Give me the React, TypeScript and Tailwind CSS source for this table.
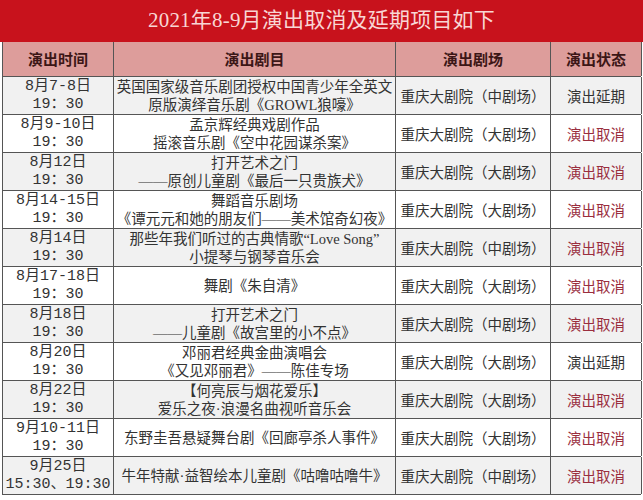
import React from 'react';

type Row = {
  date: string;
  time: string;
  show: string[];
  venue: string;
  status: string;
};

const rows: Row[] = [
  { date: '8月7-8日', time: '19：30', show: ['英国国家级音乐剧团授权中国青少年全英文', '原版演绎音乐剧《GROWL狼嚎》'], venue: '重庆大剧院（中剧场）', status: '演出延期' },
  { date: '8月9-10日', time: '19：30', show: ['孟京辉经典戏剧作品', '摇滚音乐剧《空中花园谋杀案》'], venue: '重庆大剧院（大剧场）', status: '演出取消' },
  { date: '8月12日', time: '19：30', show: ['打开艺术之门', '——原创儿童剧《最后一只贵族犬》'], venue: '重庆大剧院（大剧场）', status: '演出取消' },
  { date: '8月14-15日', time: '19：30', show: ['舞蹈音乐剧场', '《谭元元和她的朋友们——美术馆奇幻夜》'], venue: '重庆大剧院（大剧场）', status: '演出取消' },
  { date: '8月14日', time: '19：30', show: ['那些年我们听过的古典情歌“Love Song”', '小提琴与钢琴音乐会'], venue: '重庆大剧院（中剧场）', status: '演出取消' },
  { date: '8月17-18日', time: '19：30', show: ['舞剧《朱自清》'], venue: '重庆大剧院（大剧场）', status: '演出取消' },
  { date: '8月18日', time: '19：30', show: ['打开艺术之门', '——儿童剧《故宫里的小不点》'], venue: '重庆大剧院（中剧场）', status: '演出取消' },
  { date: '8月20日', time: '19：30', show: ['邓丽君经典金曲演唱会', '《又见邓丽君》——陈佳专场'], venue: '重庆大剧院（大剧场）', status: '演出延期' },
  { date: '8月22日', time: '19：30', show: ['【何亮辰与烟花爱乐】', '爱乐之夜·浪漫名曲视听音乐会'], venue: '重庆大剧院（大剧场）', status: '演出取消' },
  { date: '9月10-11日', time: '19：30', show: ['东野圭吾悬疑舞台剧《回廊亭杀人事件》'], venue: '重庆大剧院（大剧场）', status: '演出取消' },
  { date: '9月25日', time: '15:30、19:30', show: ['牛年特献·益智绘本儿童剧《咕噜咕噜牛》'], venue: '重庆大剧院（中剧场）', status: '演出取消' },
];

const cols = 'grid grid-cols-[111px_282px_155px_91px]';

export default function App() {
  return (
    <div className="w-[643px] h-[500px] bg-white overflow-hidden font-['Noto_Sans_CJK_SC',sans-serif]">
      {/* title bar */}
      <div className="h-[42px] bg-[#c8121c] flex items-center justify-center">
        <span className="text-[21px] text-[#f8d6d4] font-['Liberation_Serif','Noto_Sans_CJK_SC',serif] tracking-[0.2px]">
          2021年8-9月演出取消及延期项目如下
        </span>
      </div>

      <div className="ml-[2px] w-[639px] border-l border-[#555]">
        {/* header */}
        <div className={`${cols} h-[35px] bg-[#dd9d9b] border-b border-[#555]`}>
          {['演出时间', '演出剧目', '演出剧场', '演出状态'].map(h => (
            <div key={h} className="flex items-center justify-center border-r border-[#555] text-[15px] font-bold text-[#3c1616]">
              {h}
            </div>
          ))}
        </div>

        {/* rows */}
        {rows.map((r, i) => (
          <div
            key={i}
            className={`${cols} h-[38px] border-b border-[#555] text-[#333] ${i % 2 === 0 ? 'bg-[#f1f1f1]' : 'bg-white'}`}
          >
            <div className="flex flex-col items-center justify-center border-r border-[#555] text-[15px] leading-[18px] font-['Liberation_Mono','Noto_Sans_CJK_SC',monospace]">
              <span>{r.date}</span>
              <span>{r.time}</span>
            </div>
            <div className="flex flex-col items-center justify-center border-r border-[#555] text-[14.5px] leading-[18px] whitespace-nowrap font-['Liberation_Serif','Noto_Sans_CJK_SC',serif]">
              {r.show.map(s => (
                <span key={s}>{s}</span>
              ))}
            </div>
            <div className="flex items-center justify-center border-r border-[#555] text-[14.5px] whitespace-nowrap">
              {r.venue}
            </div>
            <div
              className={`flex items-center justify-center border-r border-[#555] text-[14.5px] ${r.status === '演出取消' ? 'text-[#9a2e3e]' : 'text-[#333]'}`}
            >
              {r.status}
            </div>
          </div>
        ))}
      </div>
    </div>
  );
}
